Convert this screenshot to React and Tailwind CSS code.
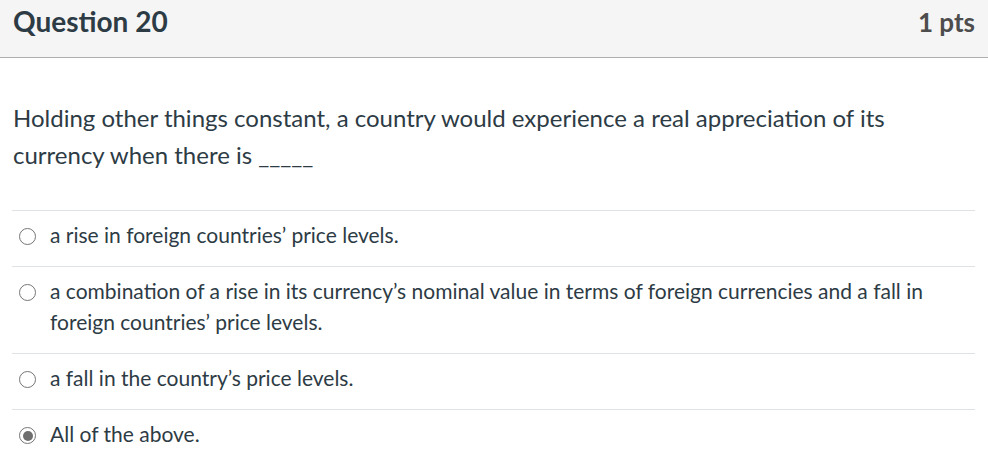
import React from "react";

const answers = [
  { text: "a rise in foreign countries\u2019 price levels.", selected: false },
  {
    text: "a combination of a rise in its currency\u2019s nominal value in terms of foreign currencies and a fall in foreign countries\u2019 price levels.",
    selected: false,
  },
  { text: "a fall in the country\u2019s price levels.", selected: false },
  { text: "All of the above.", selected: true },
];

function Radio({ selected }) {
  return (
    <span className="mt-[9px] flex h-[17px] w-[17px] shrink-0 items-center justify-center rounded-full border-[1.5px] border-[#757575] bg-white">
      {selected && <span className="h-[10px] w-[10px] rounded-full bg-[#6e6e6e]" />}
    </span>
  );
}

export default function App() {
  return (
    <div className="min-h-[469px] w-full bg-white text-[#2d3b45]" style={{ fontFamily: "Lato, 'Noto Sans', sans-serif" }}>
      <div className="flex h-[58px] items-baseline justify-between border-b border-[#adadad] bg-[#f5f5f5] px-[13px] pt-[7px]">
        <h2 className="text-[28px] font-bold leading-[28px] text-[#2d3b45]">Question 20</h2>
        <span className="text-[26px] font-bold leading-[28px] text-[#4d4d4d]">1 pts</span>
      </div>
      <div className="px-[12px]">
        <p className="pt-[41px] pb-[37px] pl-[1px] pr-[60px] text-[24px] leading-[37px]">
          Holding other things constant, a country would experience a real appreciation of its currency when there is _____
        </p>
        <div className="mr-[1px]">
          {answers.map((a, i) => (
            <div key={i} className="flex gap-[14px] border-t border-[#dfe2e5] pt-[8px] pb-[16px] pl-[7px] pr-[40px]">
              <Radio selected={a.selected} />
              <span className="text-[21px] leading-[31px]">{a.text}</span>
            </div>
          ))}
        </div>
      </div>
    </div>
  );
}
